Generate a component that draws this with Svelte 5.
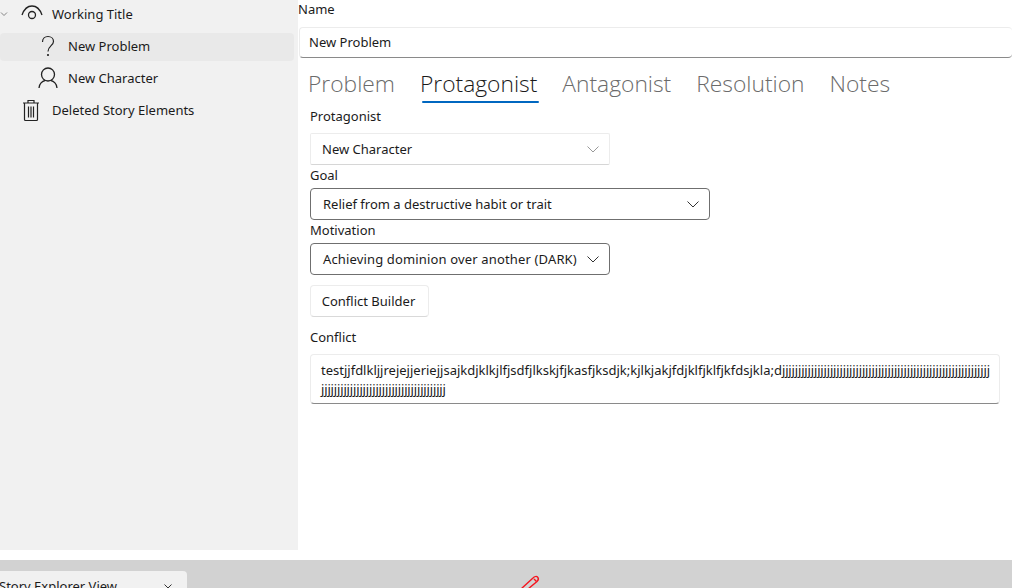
<script>
  const tabs = ["Problem", "Protagonist", "Antagonist", "Resolution", "Notes"];
  let activeTab = $state("Protagonist");
  const linePrefix = "testjjfdlkljjrejejjeriejjsajkdjklkjlfjsdfjlkskjfjkasfjksdjk;kjlkjakjfdjklfjklfjkfdsjkla;d";
  const lineOneTail = "j".repeat(65);
  const lineTwo = "j".repeat(39);
</script>

<div class="page">
  <div class="content">
    <nav class="tree">
      <div class="row root-row">
        <svg class="chevron" width="8" height="6" viewBox="0 0 8 6"><path d="M1 1.500L4 4.500L7 1.500" fill="none" stroke="#777" stroke-width="0.9"/></svg>
        <svg class="icon root" width="24" height="20" viewBox="0 0 24 20" fill="none" stroke="#222" stroke-width="1.3">
          <path d="M2 11C4.500 4 8 2 12 2C16 2 19.500 4 22 11"/>
          <circle cx="12" cy="11" r="3.500"/>
        </svg>
        <span>Working Title</span>
      </div>
      <div class="row child selected">
        <svg class="icon" width="24" height="24" viewBox="0 0 24 24" fill="none" stroke="#222" stroke-width="1.2">
          <path d="M6.500 8C6.500 4.500 9 2.500 12 2.500C15 2.500 17.500 4.500 17.500 7.500C17.500 11.500 12 12 12 17.500"/>
          <circle cx="12" cy="21" r="0.500"/>
        </svg>
        <span>New Problem</span>
      </div>
      <div class="row child">
        <svg class="icon" width="24" height="24" viewBox="0 0 24 24" fill="none" stroke="#222" stroke-width="1.3">
          <circle cx="12" cy="8.500" r="6.500"/>
          <path d="M3 22C3 18 6.500 15 9 14.500M21 22C21 18 17.500 15 15 14.500"/>
        </svg>
        <span>New Character</span>
      </div>
      <div class="row trash">
        <svg class="icon" width="20" height="24" viewBox="0 0 20 24" fill="none" stroke="#222" stroke-width="1.2">
          <path d="M2 5H18M7 5V2.500H13V5M3.500 5V21.500C3.500 22 4 22.500 4.500 22.500H15.500C16 22.500 16.500 22 16.500 21.500V5"/>
          <path d="M7.500 8.500V19.500M10 8.500V19.500M12.500 8.500V19.500"/>
        </svg>
        <span>Deleted Story Elements</span>
      </div>
    </nav>

    <main class="form">
      <div class="name-label">Name</div>
      <div class="name-input">New Problem</div>

      <div class="tabs">
        {#each tabs as tab}
          <button class="tab" class:active={tab === activeTab} onclick={() => (activeTab = tab)}>{tab}</button>
        {/each}
      </div>

      <div class="fields">
        <div class="label first">Protagonist</div>
        <div class="combo plain wide300">
          <span>New Character</span>
          <svg width="12" height="7" viewBox="0 0 12 7"><path d="M0.500 0.500L6 6L11.500 0.500" fill="none" stroke="#999" stroke-width="1"/></svg>
        </div>
        <div class="label">Goal</div>
        <div class="combo wide400">
          <span>Relief from a destructive habit or trait</span>
          <svg width="12" height="7" viewBox="0 0 12 7"><path d="M0.500 0.500L6 6L11.500 0.500" fill="none" stroke="#333" stroke-width="1"/></svg>
        </div>
        <div class="label">Motivation</div>
        <div class="combo wide300">
          <span class="roomy">Achieving dominion over another (DARK)</span>
          <svg width="12" height="7" viewBox="0 0 12 7"><path d="M0.500 0.500L6 6L11.500 0.500" fill="none" stroke="#333" stroke-width="1"/></svg>
        </div>
        <button class="builder">Conflict Builder</button>
        <div class="label conflict">Conflict</div>
        <div class="textarea">
          <div>{linePrefix}<span class="jays">{lineOneTail}</span></div>
          <div class="jays">{lineTwo}</div>
        </div>
      </div>
    </main>
  </div>

  <footer class="dock">
    <div class="dock-tab">
      <span>Story Explorer View</span>
      <svg width="8" height="5" viewBox="0 0 8 5"><path d="M0.500 0.500L4 4L7.500 0.500" fill="none" stroke="#333" stroke-width="1"/></svg>
    </div>
    <svg class="pencil" width="20" height="14" viewBox="0 0 20 14" fill="none" stroke="#f5141e" stroke-width="1.400">
      <path d="M0 14L12 3C13.500 1.500 15.500 1 16.500 2C17.500 3 17.500 5 16 6.500L7 14"/>
      <path d="M13 4L15.500 6.500"/>
    </svg>
  </footer>
</div>

<style>
  :global(body) {
    margin: 0;
    background: #fff;
    font-family: "Noto Sans", "Open Sans", sans-serif;
    font-size: 13px;
    color: #1b1b1b;
  }
  .page {
    width: 1012px;
    height: 588px;
    overflow: hidden;
    display: flex;
    flex-direction: column;
  }
  .content {
    display: flex;
    height: 550px;
    flex: none;
  }
  .tree {
    width: 298px;
    flex: none;
    background: #f1f1f1;
    box-sizing: border-box;
    padding-right: 4px;
    display: flex;
    flex-direction: column;
    gap: 4px;
  }
  .row {
    height: 28px;
    box-sizing: border-box;
    padding-bottom: 2px;
    display: flex;
    align-items: center;
    border-radius: 4px;
  }
  .root-row {
    padding-bottom: 0;
    margin-bottom: 1px;
  }
  .chevron {
    margin-right: 12px;
  }
  .root {
    margin-right: 8px;
  }
  .child {
    padding-left: 36px;
  }
  .child .icon {
    margin-right: 8px;
  }
  .trash {
    padding-left: 21px;
  }
  .trash .icon {
    margin-right: 11px;
  }
  .selected {
    background: #e9e9e9;
  }
  .form {
    flex: 1;
    min-width: 0;
    overflow: hidden;
  }
  .name-label {
    height: 18px;
    line-height: 18px;
  }
  .name-input {
    margin: 9px 0 0 1px;
    height: 31px;
    line-height: 29px;
    padding-left: 9px;
    box-sizing: border-box;
    background: #fff;
    border: 1px solid #ececec;
    border-bottom-color: #8a8a8a;
    border-radius: 4px;
    border-right: none;
  }
  .tabs {
    display: flex;
    gap: 25px;
    margin: 7px 0 0 10px;
    height: 38px;
  }
  .tab {
    position: relative;
    background: none;
    border: none;
    padding: 0;
    font-family: "Open Sans", "Noto Sans", sans-serif;
    font-weight: 300;
    font-size: 22.800px;
    line-height: 36px;
    color: #6b6b6b;
    height: 38px;
  }
  .tab.active {
    color: #1a1a1a;
  }
  .tab.active::after {
    content: "";
    position: absolute;
    left: 2px;
    right: -2px;
    bottom: 0;
    height: 2px;
    background: #0067c0;
    border-radius: 1px;
  }
  .fields {
    padding-left: 12px;
    display: flex;
    flex-direction: column;
    align-items: flex-start;
  }
  .label {
    height: 20px;
    line-height: 14px;
  }
  .label.first {
    line-height: 20px;
    margin: 3px 0 7px;
  }
  .combo {
    height: 32px;
    box-sizing: border-box;
    border: 1px solid #6f6f6f;
    border-radius: 4px;
    display: flex;
    align-items: center;
    justify-content: space-between;
    padding: 0 10px 0 12px;
    margin-bottom: 3px;
  }
  .combo.plain {
    border: 1px solid #ececec;
    border-bottom-color: #d6d6d6;
    border-radius: 2px;
    padding-left: 11px;
  }
  .roomy {
    letter-spacing: 0.15px;
  }
  .wide300 {
    width: 300px;
  }
  .wide400 {
    width: 400px;
  }
  .builder {
    margin-top: 7px;
    width: 119px;
    height: 32px;
    background: #fff;
    border: 1px solid #ececec;
    border-bottom-color: #d9d9d9;
    border-radius: 4px;
    font: inherit;
    color: inherit;
    padding: 0 2px 0 0;
  }
  .label.conflict {
    line-height: 20px;
    margin: 10px 0 7px;
  }
  .textarea {
    width: 690px;
    height: 50px;
    box-sizing: border-box;
    border: 1px solid #ececec;
    border-bottom-color: #8a8a8a;
    border-radius: 4px;
    padding: 6px 10px;
    line-height: 19px;
    white-space: nowrap;
    overflow: hidden;
  }
  .jays {
    letter-spacing: -0.155px;
  }
  .dock {
    margin-top: 10px;
    flex: 1;
    background: #d2d2d2;
    position: relative;
    padding-top: 11px;
  }
  .dock-tab {
    width: 188px;
    margin-left: -1px;
    height: 24px;
    box-sizing: border-box;
    background: #f1f1f1;
    border-radius: 0 4px 0 0;
    display: flex;
    justify-content: space-between;
    align-items: center;
    padding: 6px 15px 0 0;
  }
  .pencil {
    position: absolute;
    left: 521px;
    top: 15px;
  }
</style>
